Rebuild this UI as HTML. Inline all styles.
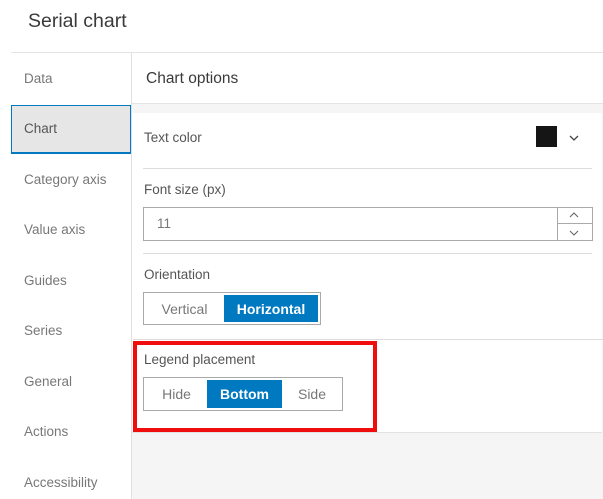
<!DOCTYPE html>
<html><head><meta charset="utf-8"><style>
*{margin:0;padding:0;box-sizing:border-box}
body{width:603px;height:499px;background:#fff;font-family:"Liberation Sans",sans-serif;color:#4a4a4a;position:relative;overflow:hidden}
.a{position:absolute;white-space:nowrap}
.nav{left:24px;font-size:13.5px;color:#777}
.lbl{left:144px;font-size:13.5px;color:#555}
.hl{position:absolute;height:1px;background:#ddd}
.grp{position:absolute;border:1px solid #a9a9a9;background:#fff}
.btn{position:absolute;top:2px;bottom:2px;font-size:14px;display:flex;align-items:center;justify-content:center;color:#777}
.btn.on{background:#0079c1;color:#fff;font-weight:bold}
</style></head><body>
<div class="a" style="left:28px;top:10px;font-size:19.5px;color:#3a3a3a">Serial chart</div>
<div class="hl" style="left:11px;right:0;top:52px;background:#e4e4e4"></div>
<div style="position:absolute;left:131px;top:53px;width:1px;bottom:0;background:#e0e0e0"></div>
<div style="position:absolute;left:132px;top:103px;right:0;bottom:0;background:#f5f5f5"></div>
<div class="hl" style="left:132px;right:0;top:103px;background:#e4e4e4"></div>
<div style="position:absolute;left:132px;top:113px;right:1px;height:319px;background:#fff"></div>
<div class="hl" style="left:132px;right:1px;top:432px;background:#e2e2e2"></div>
<div class="a" style="left:146px;top:70px;font-size:15.5px;color:#3a3a3a">Chart options</div>
<div style="position:absolute;left:11px;top:105px;width:120px;height:49px;background:#e6e6e6;border:1px solid #0079c1;border-bottom-width:2px"></div>
<div class="a nav" style="top:71px">Data</div>
<div class="a nav" style="top:121px;color:#555">Chart</div>
<div class="a nav" style="top:172px">Category axis</div>
<div class="a nav" style="top:222px">Value axis</div>
<div class="a nav" style="top:273px">Guides</div>
<div class="a nav" style="top:323px">Series</div>
<div class="a nav" style="top:374px">General</div>
<div class="a nav" style="top:424px">Actions</div>
<div class="a nav" style="top:475px">Accessibility</div>
<div class="a lbl" style="top:130px">Text color</div>
<div style="position:absolute;left:536px;top:126px;width:21px;height:21px;background:#151515"></div>
<svg style="position:absolute;left:569px;top:134px" width="10" height="8"><path d="M1 2 L5 6 L9 2" fill="none" stroke="#444" stroke-width="1.3"/></svg>
<div class="hl" style="left:143px;right:11px;top:168px"></div>
<div class="a lbl" style="top:182px">Font size (px)</div>
<div style="position:absolute;left:143px;top:207px;width:450px;height:34px;border:1px solid #a9a9a9"></div>
<div class="a" style="left:157px;top:216px;font-size:13.5px;color:#777">11</div>
<div style="position:absolute;left:557px;top:207px;width:1px;height:34px;background:#a9a9a9"></div>
<div style="position:absolute;left:557px;top:223px;width:36px;height:1px;background:#a9a9a9"></div>
<svg style="position:absolute;left:569px;top:211px" width="10" height="28"><path d="M1 6 L5 2 L9 6 M1 20 L5 24 L9 20" fill="none" stroke="#666" stroke-width="1.1"/></svg>
<div class="hl" style="left:143px;right:11px;top:253px"></div>
<div class="a lbl" style="top:267px">Orientation</div>
<div class="grp" style="left:143px;top:292px;width:178px;height:33px">
<div class="btn" style="left:2px;width:77px">Vertical</div>
<div class="btn on" style="left:80px;width:94px">Horizontal</div>
</div>
<div class="hl" style="left:133px;right:0;top:339px"></div>
<div style="position:absolute;left:133px;top:341px;width:244px;height:91px;border:4px solid #f00d0d"></div>
<div class="a lbl" style="top:352px">Legend placement</div>
<div class="grp" style="left:143px;top:377px;width:200px;height:34px">
<div class="btn" style="left:2px;width:61px">Hide</div>
<div class="btn on" style="left:63px;width:75px">Bottom</div>
<div class="btn" style="left:138px;width:60px">Side</div>
</div>
</body></html>
